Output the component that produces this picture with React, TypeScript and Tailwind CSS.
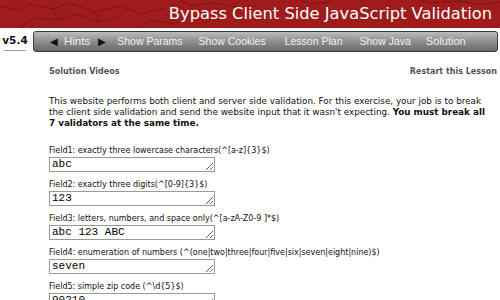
import React from "react";

const fields = [
  { label: "Field1: exactly three lowercase characters(^[a-z]{3}$)", value: "abc" },
  { label: "Field2: exactly three digits(^[0-9]{3}$)", value: "123" },
  { label: "Field3: letters, numbers, and space only(^[a-zA-Z0-9 ]*$)", value: "abc 123 ABC" },
  { label: "Field4: enumeration of numbers (^(one|two|three|four|five|six|seven|eight|nine)$)", value: "seven" },
  { label: "Field5: simple zip code (^\\d{5}$)", value: "90210" },
];

const navItems = ["Show Params", "Show Cookies", "Lesson Plan", "Show Java", "Solution"];

function Cracks() {
  return (
    <svg className="absolute inset-0 h-full w-full" viewBox="0 0 500 28" preserveAspectRatio="none">
      <g stroke="#6a0e0e" strokeWidth="1" fill="none" opacity="0.7">
        <path d="M0 6 L18 10 L30 4 L52 9 L70 3 L95 12 L120 6 L140 14 L165 8" />
        <path d="M20 28 L35 18 L60 20 L75 14 L100 22 L118 16" />
        <path d="M140 28 L150 20 L175 24 L190 16 L210 20" />
        <path d="M52 9 L58 18 L60 20" />
        <path d="M95 12 L100 22" />
        <path d="M180 0 L190 6 L215 3 L240 8" />
        <path d="M300 0 L310 4 L330 2" />
        <path d="M420 0 L430 3 L460 1 L480 5 L500 2" />
      </g>
    </svg>
  );
}

export default function App() {
  return (
    <div className="w-[500px] h-[300px] overflow-hidden bg-white" style={{ fontFamily: '"DejaVu Sans", Verdana, sans-serif' }}>
      {/* Header */}
      <div className="relative h-[28px] bg-[#a01c1c] flex items-end justify-end pr-[8px] pb-[4px]">
        <Cracks />
        <span className="relative text-white text-[16.3px] leading-[20px]" style={{ fontFamily: '"DejaVu Sans", sans-serif' }}>
          Bypass Client Side JavaScript Validation
        </span>
      </div>

      {/* Version + nav */}
      <div className="flex items-start mt-[3px] h-[22px]">
        <div className="w-[30px] h-[22px] flex flex-col items-center justify-center">
          <span className="text-[10.5px] font-bold text-[#111] leading-none mt-[2px]">v5.4</span>
          <div className="mt-[4px] h-[1px] w-[22px] bg-[#999]" />
        </div>
        <div
          className="ml-[3px] w-[465px] h-[21px] rounded-[3px] border border-[#3a3a3a] bg-gradient-to-b from-[#bdbdbd] via-[#8e8e8e] to-[#6a6a6a] flex items-center whitespace-nowrap text-[#f0f0f0] text-[10.5px]"
          style={{ fontFamily: '"Liberation Sans", Arial, sans-serif' }}
        >
          <span className="ml-[16px] text-[10px] text-[#111]">◀</span>
          <span className="ml-[6px] text-[11.5px]">Hints</span>
          <span className="ml-[8px] text-[10px] text-[#111]">▶</span>
          <span className="ml-[11px]">{navItems[0]}</span>
          <span className="ml-[16px]">{navItems[1]}</span>
          <span className="ml-[19px]">{navItems[2]}</span>
          <span className="ml-[17px]">{navItems[3]}</span>
          <span className="ml-[15px] text-[11px]">{navItems[4]}</span>
        </div>
      </div>

      {/* Content */}
      <div className="pl-[49px] pr-[3px] text-[8px] leading-[11px] text-[#111]">
        <div className="flex justify-between mt-[13px] font-bold text-[#555]">
          <span>Solution Videos</span>
          <span>Restart this Lesson</span>
        </div>

        <p className="mt-[19px] pr-[6px] text-[8.8px] leading-[11px]">
          This website performs both client and server side validation. For this exercise, your job is to break the client side validation and send the website input that it wasn't expecting.{" "}
          <b>You must break all 7 validators at the same time.</b>
        </p>

        <div className="mt-[16px] flex flex-col gap-[7px]">
          {fields.map((f) => (
            <div key={f.label} className="flex flex-col">
              <span>{f.label}</span>
              <textarea
                readOnly
                rows={1}
                value={f.value}
                className="mt-[1px] w-[166px] h-[15px] border border-[#9a9a9a] px-[2px] py-0 text-[11px] leading-[13px] text-black overflow-hidden resize"
                style={{ fontFamily: '"Liberation Mono", "Courier New", monospace' }}
              />
            </div>
          ))}
        </div>
      </div>
    </div>
  );
}
